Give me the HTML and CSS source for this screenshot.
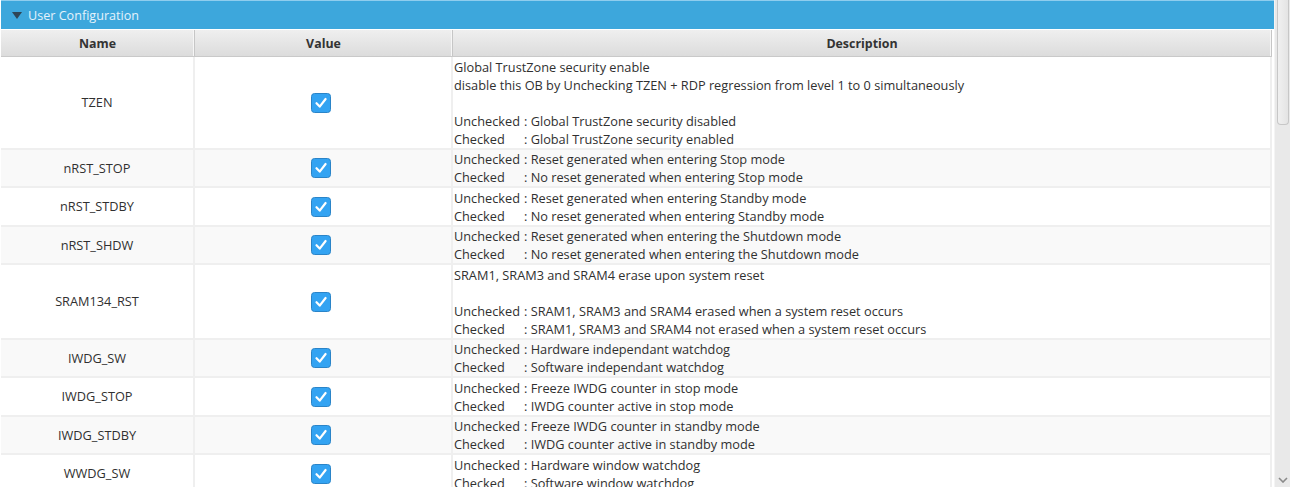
FILE: index.html
```html
<!DOCTYPE html>
<html>
<head>
<meta charset="utf-8">
<link rel="stylesheet" href="styles.css">
</head>
<body>
<div class="app">
  <div class="main">
    <div class="titlebar">
      <span class="tri"></span>
      <span class="title">User Configuration</span>
    </div>
    <div class="table">
      <div class="row head">
        <div class="cell">Name</div>
        <div class="cell">Value</div>
        <div class="cell">Description</div>
      </div>

      <div class="row">
        <div class="cell name">TZEN</div>
        <div class="cell value"><span class="chk"><svg viewBox="0 0 20 20" width="20" height="20"><rect x="0.5" y="0.5" width="19" height="19" rx="3" class="box"/><path d="M5.5 10.2 L8.7 13.6 L14.6 6" class="tick"/></svg></span></div>
        <div class="cell desc">
          <div>Global TrustZone security enable</div>
          <div>disable this OB by Unchecking TZEN + RDP regression from level 1 to 0 simultaneously</div>
          <div class="blank"></div>
          <div><span class="lbl">Unchecked</span>: Global TrustZone security disabled</div>
          <div><span class="lbl">Checked</span>: Global TrustZone security enabled</div>
        </div>
      </div>

      <div class="row">
        <div class="cell name">nRST_STOP</div>
        <div class="cell value"><span class="chk"><svg viewBox="0 0 20 20" width="20" height="20"><rect x="0.5" y="0.5" width="19" height="19" rx="3" class="box"/><path d="M5.5 10.2 L8.7 13.6 L14.6 6" class="tick"/></svg></span></div>
        <div class="cell desc">
          <div><span class="lbl">Unchecked</span>: Reset generated when entering Stop mode</div>
          <div><span class="lbl">Checked</span>: No reset generated when entering Stop mode</div>
        </div>
      </div>

      <div class="row">
        <div class="cell name">nRST_STDBY</div>
        <div class="cell value"><span class="chk"><svg viewBox="0 0 20 20" width="20" height="20"><rect x="0.5" y="0.5" width="19" height="19" rx="3" class="box"/><path d="M5.5 10.2 L8.7 13.6 L14.6 6" class="tick"/></svg></span></div>
        <div class="cell desc">
          <div><span class="lbl">Unchecked</span>: Reset generated when entering Standby mode</div>
          <div><span class="lbl">Checked</span>: No reset generated when entering Standby mode</div>
        </div>
      </div>

      <div class="row">
        <div class="cell name">nRST_SHDW</div>
        <div class="cell value"><span class="chk"><svg viewBox="0 0 20 20" width="20" height="20"><rect x="0.5" y="0.5" width="19" height="19" rx="3" class="box"/><path d="M5.5 10.2 L8.7 13.6 L14.6 6" class="tick"/></svg></span></div>
        <div class="cell desc">
          <div><span class="lbl">Unchecked</span>: Reset generated when entering the Shutdown mode</div>
          <div><span class="lbl">Checked</span>: No reset generated when entering the Shutdown mode</div>
        </div>
      </div>

      <div class="row">
        <div class="cell name">SRAM134_RST</div>
        <div class="cell value"><span class="chk"><svg viewBox="0 0 20 20" width="20" height="20"><rect x="0.5" y="0.5" width="19" height="19" rx="3" class="box"/><path d="M5.5 10.2 L8.7 13.6 L14.6 6" class="tick"/></svg></span></div>
        <div class="cell desc">
          <div>SRAM1, SRAM3 and SRAM4 erase upon system reset</div>
          <div class="blank"></div>
          <div><span class="lbl">Unchecked</span>: SRAM1, SRAM3 and SRAM4 erased when a system reset occurs</div>
          <div><span class="lbl">Checked</span>: SRAM1, SRAM3 and SRAM4 not erased when a system reset occurs</div>
        </div>
      </div>

      <div class="row">
        <div class="cell name">IWDG_SW</div>
        <div class="cell value"><span class="chk"><svg viewBox="0 0 20 20" width="20" height="20"><rect x="0.5" y="0.5" width="19" height="19" rx="3" class="box"/><path d="M5.5 10.2 L8.7 13.6 L14.6 6" class="tick"/></svg></span></div>
        <div class="cell desc">
          <div><span class="lbl">Unchecked</span>: Hardware independant watchdog</div>
          <div><span class="lbl">Checked</span>: Software independant watchdog</div>
        </div>
      </div>

      <div class="row">
        <div class="cell name">IWDG_STOP</div>
        <div class="cell value"><span class="chk"><svg viewBox="0 0 20 20" width="20" height="20"><rect x="0.5" y="0.5" width="19" height="19" rx="3" class="box"/><path d="M5.5 10.2 L8.7 13.6 L14.6 6" class="tick"/></svg></span></div>
        <div class="cell desc">
          <div><span class="lbl">Unchecked</span>: Freeze IWDG counter in stop mode</div>
          <div><span class="lbl">Checked</span>: IWDG counter active in stop mode</div>
        </div>
      </div>

      <div class="row">
        <div class="cell name">IWDG_STDBY</div>
        <div class="cell value"><span class="chk"><svg viewBox="0 0 20 20" width="20" height="20"><rect x="0.5" y="0.5" width="19" height="19" rx="3" class="box"/><path d="M5.5 10.2 L8.7 13.6 L14.6 6" class="tick"/></svg></span></div>
        <div class="cell desc">
          <div><span class="lbl">Unchecked</span>: Freeze IWDG counter in standby mode</div>
          <div><span class="lbl">Checked</span>: IWDG counter active in standby mode</div>
        </div>
      </div>

      <div class="row">
        <div class="cell name">WWDG_SW</div>
        <div class="cell value"><span class="chk"><svg viewBox="0 0 20 20" width="20" height="20"><rect x="0.5" y="0.5" width="19" height="19" rx="3" class="box"/><path d="M5.5 10.2 L8.7 13.6 L14.6 6" class="tick"/></svg></span></div>
        <div class="cell desc">
          <div><span class="lbl">Unchecked</span>: Hardware window watchdog</div>
          <div><span class="lbl">Checked</span>: Software window watchdog</div>
        </div>
      </div>
    </div>
  </div>
  <div class="scrollbar">
    <div class="thumb"></div>
    <div class="track"></div>
    <svg class="arrow" viewBox="0 0 10 6" width="10" height="6"><path d="M1 1 L5 5 L9 1"/></svg>
  </div>
</div>
</body>
</html>
```

FILE: styles.css
```css
* { box-sizing: border-box; }

html, body {
  margin: 0;
  padding: 0;
  background: #ffffff;
}

body {
  font-family: "Open Sans", "Noto Sans", "Liberation Sans", sans-serif;
  font-size: 12.75px;
  color: #303030;
}

.app {
  display: flex;
  width: 1290px;
  height: 487px;
  overflow: hidden;
}

.main {
  flex: 1;
  display: flex;
  flex-direction: column;
  padding-left: 1px;
  min-width: 0;
}

.titlebar {
  height: 29px;
  flex: none;
  background: #3da7dc;
  border-top: 1px solid #8fcdee;
  display: flex;
  align-items: center;
  gap: 6px;
  padding-left: 11px;
  padding-top: 1px;
}

.tri {
  width: 0;
  height: 0;
  border-left: 5px solid transparent;
  border-right: 5px solid transparent;
  border-top: 7px solid #2f4656;
}

.title {
  color: #e4f2fb;
  font-size: 12.6px;
}

.table {
  margin-right: 2px;
  display: flex;
  flex-direction: column;
}

.row {
  display: grid;
  grid-template-columns: 194px 258px 1fr;
  border-bottom: 2px solid #efefef;
  background: #ffffff;
}

.row:nth-child(odd) {
  background: #f9f9f9;
}

.row.head {
  height: 28px;
  background: linear-gradient(#efefef, #dcdcdc);
  border-bottom: 1px solid #c9c9c9;
  border-top: 1px solid #ffffff;
}

.head .cell {
  font-weight: bold;
  font-size: 12.4px;
  color: #333333;
  display: flex;
  align-items: center;
  justify-content: center;
  padding-top: 2px;
  border-right: 1px solid #c6c6c6;
  box-shadow: inset -1px 0 0 #f6f6f6;
}

.cell {
  border-right: 2px solid #efefef;
  line-height: 18px;
}

.cell.name {
  display: flex;
  align-items: center;
  justify-content: center;
}

.cell.value {
  display: flex;
  align-items: center;
  justify-content: center;
  padding-right: 4px;
}

.cell.desc {
  padding: 0.5px 0 0 1px;
  white-space: nowrap;
}

.blank {
  height: 18px;
}

.lbl {
  display: inline-block;
  width: 70px;
}

.chk {
  display: flex;
  width: 20px;
  height: 20px;
  margin-top: 1px;
}

.chk .box {
  fill: #33a3f2;
  stroke: #2a84c8;
  stroke-width: 1;
}

.chk .tick {
  fill: none;
  stroke: #ffffff;
  stroke-width: 2.2;
  stroke-linecap: round;
  stroke-linejoin: round;
}

.scrollbar {
  width: 16px;
  flex: none;
  display: flex;
  flex-direction: column;
  align-items: center;
  background: #e9e9e9;
  border-left: 1px solid #f4f4f4;
  padding-bottom: 4px;
}

.thumb {
  width: 12px;
  height: 125px;
  flex: none;
  background: linear-gradient(90deg, #f0f0f0, #e4e4e4);
  border: 1px solid #c7c7c7;
  border-top: none;
  border-radius: 0 0 4px 4px;
}

.track {
  flex: 1;
}

.arrow {
  flex: none;
}

.arrow path {
  fill: none;
  stroke: #8a8a8a;
  stroke-width: 1.6;
}
```
